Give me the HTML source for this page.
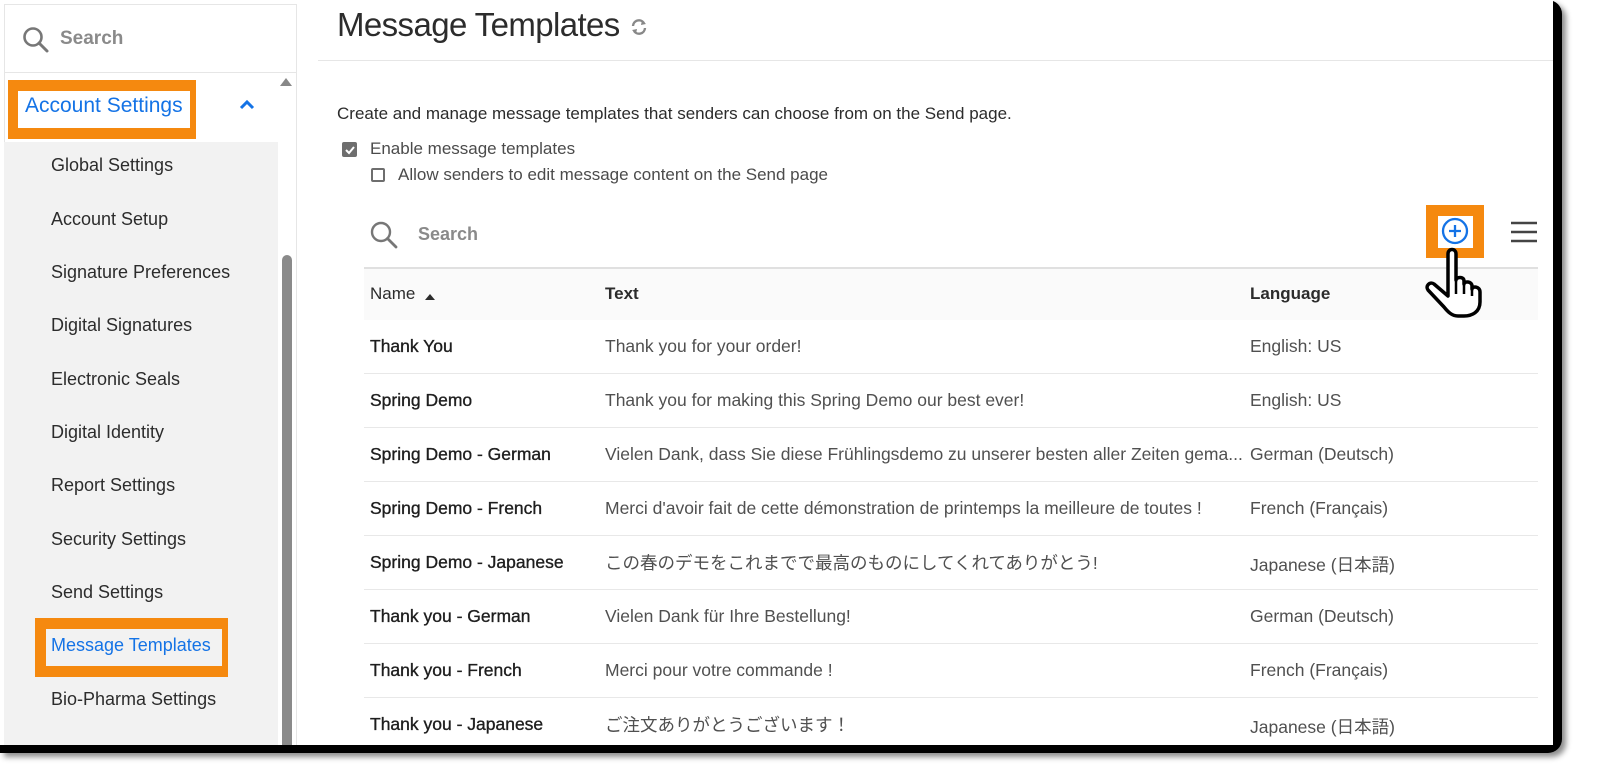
<!DOCTYPE html>
<html><head><meta charset="utf-8"><style>
*{margin:0;padding:0;box-sizing:border-box}
body{width:1612px;height:776px;background:#fff;position:relative;overflow:hidden;font-family:"Liberation Sans","Noto Sans CJK JP",sans-serif;color:#2c2c2c}
.a{position:absolute;white-space:nowrap}
.frame{position:absolute;left:0;top:0;width:1562px;height:753px;background:#000;border-radius:0 14px 14px 0;box-shadow:4px 4px 6px rgba(0,0,0,.45)}
.inner{position:absolute;left:0;top:0;width:1553px;height:745px;background:#fff;overflow:hidden}
.side{position:absolute;left:4px;top:4px;width:293px;height:760px;border:1px solid #e6e6e6;background:#fff}
.sub{position:absolute;left:4px;top:142px;width:274px;height:620px;background:#f2f2f2}
.si{position:absolute;left:51px;font-size:18px;color:#2c2c2c}
.row{position:absolute;left:364px;width:1174px;height:54px;border-bottom:1px solid #e8e8e8}
.row span{position:absolute;top:16px;font-size:17.5px;white-space:nowrap}
.n{left:6px;color:#1e1e1e;font-size:17.5px!important;-webkit-text-stroke:.35px #1e1e1e}
.t{left:241px;color:#505050}
.l{left:886px;color:#505050}
</style></head><body>
<div class="frame"></div>
<div class="inner">
<div class="side"></div>
<svg class="a" style="left:22px;top:26px" width="28" height="28" viewBox="0 0 28 28"><circle cx="11" cy="11" r="8.5" fill="none" stroke="#777" stroke-width="2.6"/><line x1="17" y1="17" x2="25" y2="25" stroke="#777" stroke-width="3" stroke-linecap="round"/></svg>
<div class="a" style="left:60px;top:28px;font-size:19px;color:#8a8a8a;font-weight:600">Search</div>
<div class="a" style="left:4px;top:72px;width:293px;height:1px;background:#e6e6e6"></div>
<div class="a" style="left:8px;top:80px;width:188px;height:59px;background:#f5890f"></div>
<div class="a" style="left:18px;top:91px;width:172px;height:37px;background:#fff"></div>
<div class="a" style="left:25px;top:94px;font-size:21px;color:#1473e6">Account Settings</div>
<svg class="a" style="left:238px;top:99px" width="18" height="12"><path d="M3 9 L9 3 L15 9" fill="none" stroke="#1473e6" stroke-width="3"/></svg>
<div class="sub"></div>
<svg class="a" style="left:278px;top:76px" width="16" height="12"><path d="M2 10 L8 2 L14 10Z" fill="#888"/></svg>
<div class="a" style="left:282px;top:255px;width:10px;height:500px;background:#8a8a8a;border-radius:5px 5px 0 0"></div>
<div class="si" style="top:155px">Global Settings</div>
<div class="si" style="top:209px">Account Setup</div>
<div class="si" style="top:262px">Signature Preferences</div>
<div class="si" style="top:315px">Digital Signatures</div>
<div class="si" style="top:369px">Electronic Seals</div>
<div class="si" style="top:422px">Digital Identity</div>
<div class="si" style="top:475px">Report Settings</div>
<div class="si" style="top:529px">Security Settings</div>
<div class="si" style="top:582px">Send Settings</div>
<div class="a" style="left:35px;top:618px;width:193px;height:59px;background:#f5890f"></div>
<div class="a" style="left:46px;top:629px;width:176px;height:37px;background:#f2f2f2"></div>
<div class="si" style="top:635px;color:#1473e6">Message Templates</div>
<div class="si" style="top:689px">Bio-Pharma Settings</div>

<div class="a" style="left:337px;top:6px;font-size:33px;color:#2c2c2c;font-weight:300;letter-spacing:-.6px">Message Templates</div>
<svg class="a" style="left:629px;top:17px" width="20" height="20" viewBox="0 0 20 20"><path d="M4 9 A6 6 0 0 1 15 6" fill="none" stroke="#888" stroke-width="2.4"/><path d="M16 11 A6 6 0 0 1 5 14" fill="none" stroke="#888" stroke-width="2.4"/><path d="M13 3 L17 7 L12 8Z" fill="#888"/><path d="M7 17 L3 13 L8 12Z" fill="#888"/></svg>
<div class="a" style="left:318px;top:60px;width:1240px;height:1px;background:#e6e6e6"></div>
<div class="a" style="left:337px;top:104px;font-size:17px;color:#2c2c2c">Create and manage message templates that senders can choose from on the Send page.</div>
<div class="a" style="left:342px;top:142px;width:15px;height:15px;background:#6e6e6e;border-radius:2px"></div>
<svg class="a" style="left:344px;top:144px" width="12" height="12"><path d="M2 6 L5 9 L10 3" fill="none" stroke="#fff" stroke-width="2"/></svg>
<div class="a" style="left:370px;top:139px;font-size:17px;color:#4b4b4b">Enable message templates</div>
<div class="a" style="left:371px;top:168px;width:14px;height:14px;border:2px solid #6e6e6e;border-radius:2px"></div>
<div class="a" style="left:398px;top:165px;font-size:17px;color:#4b4b4b">Allow senders to edit message content on the Send page</div>

<svg class="a" style="left:369px;top:220px" width="30" height="30" viewBox="0 0 30 30"><circle cx="12" cy="12" r="9" fill="none" stroke="#777" stroke-width="2.4"/><line x1="18.5" y1="18.5" x2="27" y2="27" stroke="#777" stroke-width="2.8" stroke-linecap="round"/></svg>
<div class="a" style="left:418px;top:224px;font-size:18px;color:#8a8a8a;font-weight:600">Search</div>
<div class="a" style="left:1426px;top:205px;width:58px;height:53px;background:#f5890f"></div>
<div class="a" style="left:1438px;top:216px;width:35px;height:32px;background:#fff"></div>
<svg class="a" style="left:1440px;top:216px" width="30" height="30" viewBox="0 0 30 30"><circle cx="15" cy="15" r="12" fill="none" stroke="#1473e6" stroke-width="2.3"/><path d="M15 9 V21 M9 15 H21" stroke="#1473e6" stroke-width="2.3"/></svg>
<svg class="a" style="left:1510px;top:220px" width="28" height="24"><path d="M1 3 H27 M1 12 H27 M1 21 H27" stroke="#444" stroke-width="2.6"/></svg>

<div class="a" style="left:364px;top:267px;width:1174px;height:2px;background:#e0e0e0"></div>
<div class="a" style="left:364px;top:269px;width:1174px;height:51px;background:#fafafa"></div>
<div class="a" style="left:370px;top:284px;font-size:17px;color:#2c2c2c">Name</div>
<svg class="a" style="left:424px;top:293px" width="12" height="8"><path d="M1 7 L6 1 L11 7Z" fill="#2c2c2c"/></svg>
<div class="a" style="left:605px;top:284px;font-size:17px;font-weight:700;color:#2c2c2c">Text</div>
<div class="a" style="left:1250px;top:284px;font-size:17px;font-weight:700;color:#2c2c2c">Language</div>

<div class="row" style="top:320px"><span class="n">Thank You</span><span class="t">Thank you for your order!</span><span class="l">English: US</span></div>
<div class="row" style="top:374px"><span class="n">Spring Demo</span><span class="t">Thank you for making this Spring Demo our best ever!</span><span class="l">English: US</span></div>
<div class="row" style="top:428px"><span class="n">Spring Demo - German</span><span class="t">Vielen Dank, dass Sie diese Frühlingsdemo zu unserer besten aller Zeiten gema...</span><span class="l">German (Deutsch)</span></div>
<div class="row" style="top:482px"><span class="n">Spring Demo - French</span><span class="t">Merci d'avoir fait de cette démonstration de printemps la meilleure de toutes !</span><span class="l">French (Français)</span></div>
<div class="row" style="top:536px"><span class="n">Spring Demo - Japanese</span><span class="t" style="top:14px">この春のデモをこれまでで最高のものにしてくれてありがとう!</span><span class="l">Japanese (日本語)</span></div>
<div class="row" style="top:590px"><span class="n">Thank you - German</span><span class="t">Vielen Dank für Ihre Bestellung!</span><span class="l">German (Deutsch)</span></div>
<div class="row" style="top:644px"><span class="n">Thank you - French</span><span class="t">Merci pour votre commande !</span><span class="l">French (Français)</span></div>
<div class="row" style="top:698px;border:none"><span class="n">Thank you - Japanese</span><span class="t" style="top:14px">ご注文ありがとうございます！</span><span class="l">Japanese (日本語)</span></div>

<svg class="a" style="left:1420px;top:244px;z-index:5" width="70" height="76" viewBox="0 0 70 76"><path d="M28 10 C28 4 36 4 36 10 V36 C36 33 44 32 44 37 V40 C44 37 52 37 52 42 V45 C52 42 60 42 60 48 V58 C60 68 52 72 44 72 H38 C32 72 28 68 24 63 L8 46 C5 42 10 37 14 40 L28 52 Z" fill="#fff" stroke="#000" stroke-width="3.5" stroke-linejoin="round"/><path d="M36 36 V50 M44 40 V50 M52 45 V52" stroke="#000" stroke-width="2.5"/></svg>
</div>
</body></html>
